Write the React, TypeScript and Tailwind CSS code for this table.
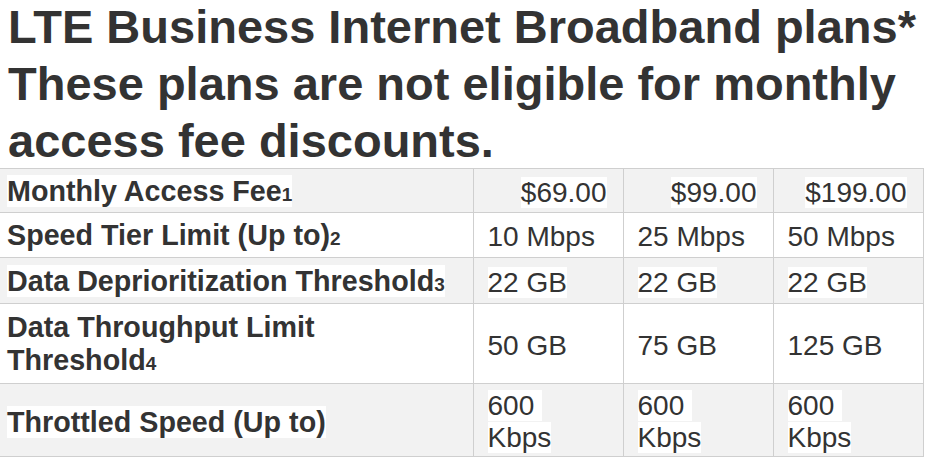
import React from "react";

const font = { fontFamily: '"Liberation Sans", Arial, Helvetica, sans-serif' };

type Row = {
  label: React.ReactNode;
  values: React.ReactNode[];
  h: string;
  gray: boolean;
  right?: boolean;
};

const Hl = ({ children }: { children: React.ReactNode }) => (
  <span className="bg-white">{children}</span>
);

const Sup = ({ n }: { n: string }) => <span className="text-[19px]">{n}</span>;

const rows: Row[] = [
  {
    label: (
      <Hl>
        Monthly Access Fee<Sup n="1" />
      </Hl>
    ),
    values: [<Hl>$69.00</Hl>, <Hl>$99.00</Hl>, <Hl>$199.00</Hl>],
    h: "h-[44px]",
    gray: true,
    right: true,
  },
  {
    label: (
      <Hl>
        Speed Tier Limit (Up to)<Sup n="2" />
      </Hl>
    ),
    values: [<Hl>10 Mbps</Hl>, <Hl>25 Mbps</Hl>, <Hl>50 Mbps</Hl>],
    h: "h-[45px]",
    gray: false,
  },
  {
    label: (
      <Hl>
        Data Deprioritization Threshold<Sup n="3" />
      </Hl>
    ),
    values: [<Hl>22 GB</Hl>, <Hl>22 GB</Hl>, <Hl>22 GB</Hl>],
    h: "h-[46px]",
    gray: true,
  },
  {
    label: (
      <Hl>
        Data Throughput Limit
        <br />
        Threshold<Sup n="4" />
      </Hl>
    ),
    values: [<Hl>50 GB</Hl>, <Hl>75 GB</Hl>, <Hl>125 GB</Hl>],
    h: "h-[80px]",
    gray: false,
  },
  {
    label: <Hl>Throttled Speed (Up to)</Hl>,
    values: [0, 1, 2].map((i) => (
      <span key={i}>
        <Hl>600{"\u00a0"}</Hl>
        <br />
        <Hl>Kbps</Hl>
      </span>
    )),
    h: "h-[73px]",
    gray: true,
  },
];

export default function App() {
  return (
    <div className="w-[925px] h-[463px] bg-white text-[#333333] overflow-hidden" style={font}>
      <div className="h-[170px] px-[8px]">
        <h1 className="-mt-[2px] text-[47px] leading-[57px] font-bold whitespace-nowrap tracking-normal">
          LTE Business Internet Broadband plans*
          <br />
          These plans are not eligible for monthly
          <br />
          access fee discounts.
        </h1>
      </div>
      <table className="border-collapse table-fixed w-[923px] text-[28px]">
        <colgroup>
          <col className="w-[473px]" />
          <col className="w-[150px]" />
          <col className="w-[150px]" />
          <col className="w-[150px]" />
        </colgroup>
        <tbody>
          {rows.map((r, i) => (
            <tr key={i} className={`${r.h} ${r.gray ? "bg-[#f2f2f2]" : "bg-white"}`}>
              <td className="border-t border-b border-r border-[#cfcfcf] pl-[7px] pr-1 pt-[4px] text-[28.7px] font-bold leading-[33px] align-middle whitespace-nowrap">
                {r.label}
              </td>
              {r.values.map((v, j) => (
                <td
                  key={j}
                  className={`border border-[#cfcfcf] pl-[14px] pr-[16px] pt-[4px] leading-[32px] align-middle whitespace-nowrap ${
                    r.right ? "text-right" : "text-left"
                  }`}
                >
                  {v}
                </td>
              ))}
            </tr>
          ))}
        </tbody>
      </table>
    </div>
  );
}
